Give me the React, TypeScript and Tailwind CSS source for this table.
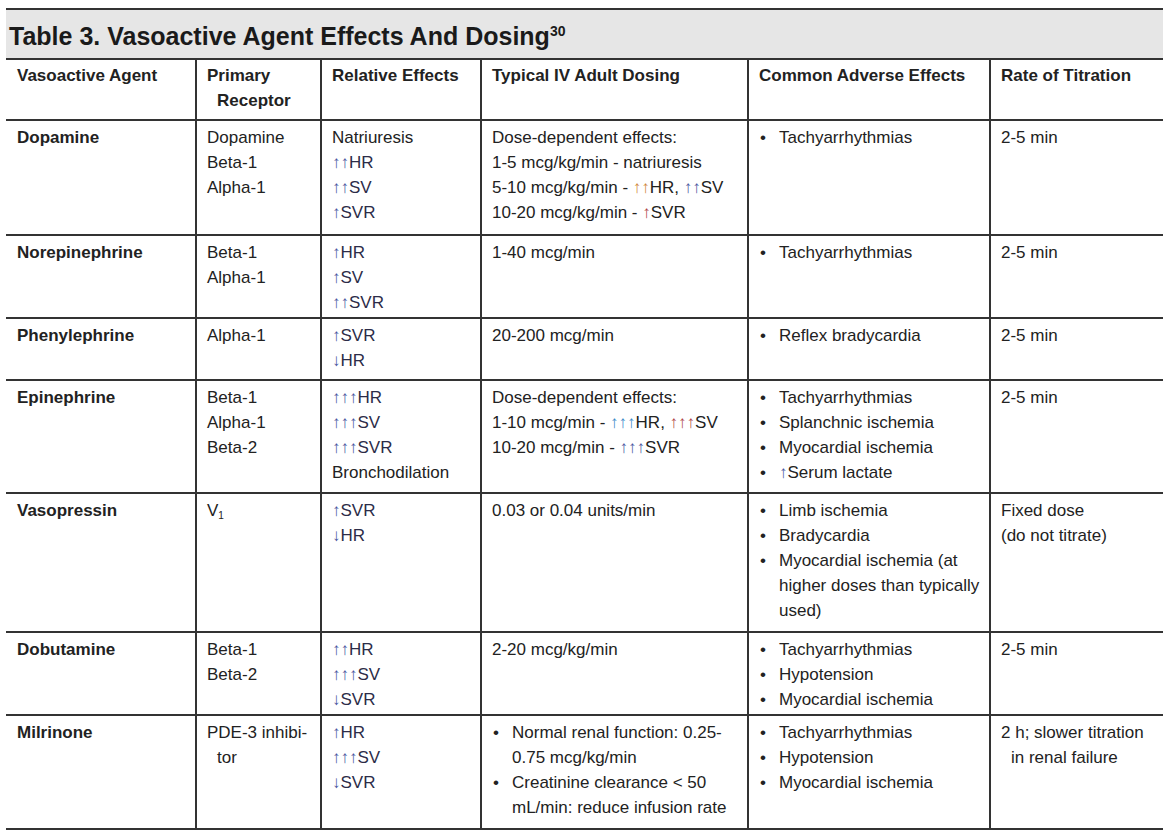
import React from 'react';

type Line = React.ReactNode;

const up = (n: number, color: string) => (
  <span style={{ color }}>{'↑'.repeat(n)}</span>
);
const down = (color: string) => <span style={{ color }}>↓</span>;

const BLUE = '#4b58a0';
const ORANGE = '#cf873c';
const RED = '#b04848';
const CYAN = '#3a8ac8';

function Eff({ a, label }: { a: React.ReactNode; label: string }) {
  return (
    <div className="text-[#2c2c48]">
      {a}
      {label}
    </div>
  );
}

function Lines({ items }: { items: Line[] }) {
  return (
    <>
      {items.map((t, i) => (
        <div key={i}>{t}</div>
      ))}
    </>
  );
}

function Bullets({ items }: { items: Line[] }) {
  return (
    <>
      {items.map((t, i) => (
        <div key={i} className="flex">
          <span className="w-[20px] shrink-0 pl-[1px]">•</span>
          <span>{t}</span>
        </div>
      ))}
    </>
  );
}

type Row = {
  agent: string;
  h: string;
  receptor: React.ReactNode;
  effects: React.ReactNode;
  dosing: React.ReactNode;
  adverse: React.ReactNode;
  rate: React.ReactNode;
};

const rows: Row[] = [
  {
    agent: 'Dopamine',
    h: 'h-[115px]',
    receptor: <Lines items={['Dopamine', 'Beta-1', 'Alpha-1']} />,
    effects: (
      <>
        <div>Natriuresis</div>
        <Eff a={up(2, BLUE)} label="HR" />
        <Eff a={up(2, BLUE)} label="SV" />
        <Eff a={up(1, BLUE)} label="SVR" />
      </>
    ),
    dosing: (
      <Lines
        items={[
          'Dose-dependent effects:',
          '1-5 mcg/kg/min - natriuresis',
          <>
            5-10 mcg/kg/min - {up(2, ORANGE)}HR, {up(2, BLUE)}SV
          </>,
          <>10-20 mcg/kg/min - {up(1, RED)}SVR</>,
        ]}
      />
    ),
    adverse: <Bullets items={['Tachyarrhythmias']} />,
    rate: '2-5 min',
  },
  {
    agent: 'Norepinephrine',
    h: 'h-[83px]',
    receptor: <Lines items={['Beta-1', 'Alpha-1']} />,
    effects: (
      <>
        <Eff a={up(1, BLUE)} label="HR" />
        <Eff a={up(1, BLUE)} label="SV" />
        <Eff a={up(2, BLUE)} label="SVR" />
      </>
    ),
    dosing: '1-40 mcg/min',
    adverse: <Bullets items={['Tachyarrhythmias']} />,
    rate: '2-5 min',
  },
  {
    agent: 'Phenylephrine',
    h: 'h-[62px]',
    receptor: 'Alpha-1',
    effects: (
      <>
        <Eff a={up(1, BLUE)} label="SVR" />
        <Eff a={down(BLUE)} label="HR" />
      </>
    ),
    dosing: '20-200 mcg/min',
    adverse: <Bullets items={['Reflex bradycardia']} />,
    rate: '2-5 min',
  },
  {
    agent: 'Epinephrine',
    h: 'h-[113px]',
    receptor: <Lines items={['Beta-1', 'Alpha-1', 'Beta-2']} />,
    effects: (
      <>
        <Eff a={up(3, BLUE)} label="HR" />
        <Eff a={up(3, BLUE)} label="SV" />
        <Eff a={up(3, BLUE)} label="SVR" />
        <div>Bronchodilation</div>
      </>
    ),
    dosing: (
      <Lines
        items={[
          'Dose-dependent effects:',
          <>
            1-10 mcg/min - {up(3, CYAN)}HR, {up(3, RED)}SV
          </>,
          <>10-20 mcg/min - {up(3, BLUE)}SVR</>,
        ]}
      />
    ),
    adverse: (
      <Bullets
        items={[
          'Tachyarrhythmias',
          'Splanchnic ischemia',
          'Myocardial ischemia',
          <>{up(1, BLUE)}Serum lactate</>,
        ]}
      />
    ),
    rate: '2-5 min',
  },
  {
    agent: 'Vasopressin',
    h: 'h-[139px]',
    receptor: (
      <>
        V<sub className="text-[10px] relative top-[3px]">1</sub>
      </>
    ),
    effects: (
      <>
        <Eff a={up(1, BLUE)} label="SVR" />
        <Eff a={down(BLUE)} label="HR" />
      </>
    ),
    dosing: '0.03 or 0.04 units/min',
    adverse: (
      <Bullets
        items={[
          'Limb ischemia',
          'Bradycardia',
          'Myocardial ischemia (at higher doses than typically used)',
        ]}
      />
    ),
    rate: <Lines items={['Fixed dose', '(do not titrate)']} />,
  },
  {
    agent: 'Dobutamine',
    h: 'h-[83px]',
    receptor: <Lines items={['Beta-1', 'Beta-2']} />,
    effects: (
      <>
        <Eff a={up(2, BLUE)} label="HR" />
        <Eff a={up(3, BLUE)} label="SV" />
        <Eff a={down(BLUE)} label="SVR" />
      </>
    ),
    dosing: '2-20 mcg/kg/min',
    adverse: <Bullets items={['Tachyarrhythmias', 'Hypotension', 'Myocardial ischemia']} />,
    rate: '2-5 min',
  },
  {
    agent: 'Milrinone',
    h: 'h-[114px]',
    receptor: <div className="pl-[10px] -indent-[10px]">PDE-3 inhibi- tor</div>,
    effects: (
      <>
        <Eff a={up(1, BLUE)} label="HR" />
        <Eff a={up(3, BLUE)} label="SV" />
        <Eff a={down(BLUE)} label="SVR" />
      </>
    ),
    dosing: (
      <Bullets
        items={[
          'Normal renal function: 0.25-0.75 mcg/kg/min',
          'Creatinine clearance < 50 mL/min: reduce infusion rate',
        ]}
      />
    ),
    adverse: <Bullets items={['Tachyarrhythmias', 'Hypotension', 'Myocardial ischemia']} />,
    rate: <div className="pl-[10px] -indent-[10px]">2 h; slower titration in renal failure</div>,
  },
];

const cell = 'align-top pl-[10px] pr-[5px] pt-[4px] pb-[1px] border-l-[2px] border-[#333]';

export default function App() {
  return (
    <div
      className="bg-white min-h-[838px] pt-[8px] pl-[6px] text-[#222] text-[17px] leading-[25px]"
      style={{ fontFamily: '"Liberation Sans", Arial, sans-serif' }}
    >
      <table className="table-fixed border-collapse w-[1157px]">
        <colgroup>
          <col className="w-[190px]" />
          <col className="w-[125px]" />
          <col className="w-[160px]" />
          <col className="w-[267px]" />
          <col className="w-[242px]" />
          <col className="w-[173px]" />
        </colgroup>
        <thead>
          <tr className="bg-[#e6e6e6] border-t-[2px] border-b-[2px] border-[#333]">
            <th
              colSpan={6}
              className="text-left font-bold text-[25px] leading-[28px] text-[#1a1a1a] pl-[3px] pt-[12px] pb-[8px] align-top"
            >
              Table 3. Vasoactive Agent Effects And Dosing
              <sup className="text-[14px] relative -top-[9px] align-baseline">30</sup>
            </th>
          </tr>
          <tr className="border-b-[2px] border-[#333] font-bold text-left h-[61px]">
            <th className="align-top pl-[11px] pt-[3px] pb-[1px] text-left font-bold">
              Vasoactive Agent
            </th>
            <th className={cell + ' text-left font-bold !pt-[3px]'}>
              <div className="pl-[10px] -indent-[10px]">Primary Receptor</div>
            </th>
            <th className={cell + ' text-left font-bold !pt-[3px]'}>Relative Effects</th>
            <th className={cell + ' text-left font-bold !pt-[3px]'}>Typical IV Adult Dosing</th>
            <th className={cell + ' text-left font-bold !pt-[3px]'}>Common Adverse Effects</th>
            <th className={cell + ' text-left font-bold !pt-[3px]'}>Rate of Titration</th>
          </tr>
        </thead>
        <tbody>
          {rows.map((r) => (
            <tr key={r.agent} className={'border-b-[2px] border-[#333] ' + r.h}>
              <td className="align-top pl-[11px] pt-[4px] pb-[1px] font-bold">{r.agent}</td>
              <td className={cell}>{r.receptor}</td>
              <td className={cell}>{r.effects}</td>
              <td className={cell}>{r.dosing}</td>
              <td className={cell}>{r.adverse}</td>
              <td className={cell}>{r.rate}</td>
            </tr>
          ))}
        </tbody>
      </table>
    </div>
  );
}
